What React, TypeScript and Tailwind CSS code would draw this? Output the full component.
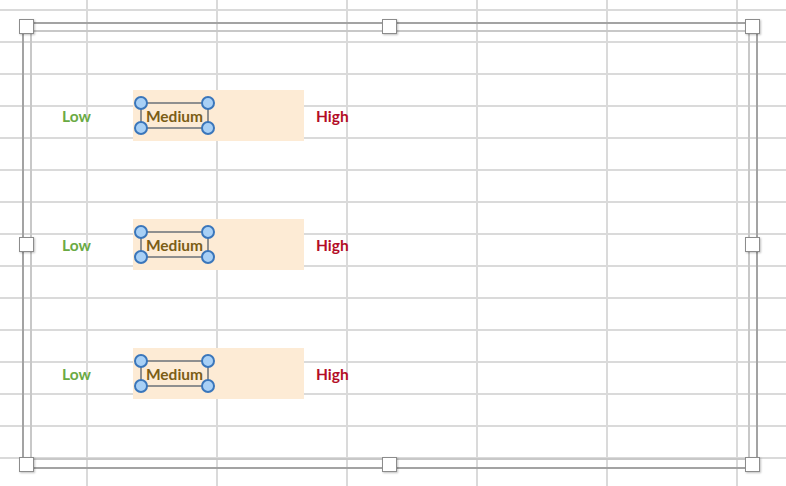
import React from "react";

const COLS = [88, 130, 130, 130, 130, 130, 130];
const ROWS = 16;

function Handle({ cls }: { cls: string }) {
  return (
    <div
      className={`absolute w-[15px] h-[15px] bg-white border border-[#8c8c8c] shadow-[1px_1px_2px_rgba(0,0,0,0.25)] ${cls}`}
    />
  );
}

function Dot({ cls }: { cls: string }) {
  return (
    <div
      className={`absolute w-[14px] h-[14px] rounded-full bg-[#a8d0f6] border-2 border-[#3a76bb] ${cls}`}
    />
  );
}

function Row() {
  return (
    <div className="flex items-center h-[51px]">
      <div className="w-[133px] pl-[62px] mt-[3px] text-[#6aaa44]">Low</div>
      <div className="w-[171px] h-[51px] bg-[#fdebd5] flex items-center pl-[7px]">
        <div className="relative w-[69px] h-[27px] border-2 border-[#8f8f8f] flex items-center justify-center text-[#7b5d16]">
          <span className="mt-[3px]">Medium</span>
          <Dot cls="-left-[8px] -top-[8px]" />
          <Dot cls="-right-[8px] -top-[8px]" />
          <Dot cls="-left-[8px] -bottom-[8px]" />
          <Dot cls="-right-[8px] -bottom-[8px]" />
        </div>
      </div>
      <div className="ml-[12px] mt-[3px] text-[#b30d26]">High</div>
    </div>
  );
}

export default function App() {
  return (
    <div className="relative w-[786px] h-[486px] overflow-hidden bg-white font-['Lato','Liberation_Sans',sans-serif] font-bold text-[15.5px]">
      {/* spreadsheet grid */}
      <div className="flex flex-col">
        {Array.from({ length: ROWS }).map((_, r) => (
          <div key={r} className={`flex ${r === 0 ? "h-[11px]" : "h-[32px]"}`}>
            {COLS.map((w, c) => (
              <div
                key={c}
                style={{ width: w }}
                className="shrink-0 border-r-2 border-b-2 border-[#dadada]"
              />
            ))}
          </div>
        ))}
      </div>

      {/* selection frame */}
      <div className="absolute left-[22px] top-[22px] w-[736px] h-[447px] border-[2px] border-[#a3a3a3]" />
      <div className="absolute left-[30px] top-[30px] w-[720px] h-[430px] border-[2px] border-[#c8c8c8]" />

      {/* content */}
      <div className="absolute left-0 top-[90px] flex flex-col gap-[78px]">
        <Row />
        <Row />
        <Row />
      </div>

      <Handle cls="left-[19px] top-[19px]" />
      <Handle cls="left-[382px] top-[19px]" />
      <Handle cls="left-[745px] top-[19px]" />
      <Handle cls="left-[19px] top-[237px]" />
      <Handle cls="left-[745px] top-[237px]" />
      <Handle cls="left-[19px] top-[457px]" />
      <Handle cls="left-[382px] top-[457px]" />
      <Handle cls="left-[745px] top-[457px]" />
    </div>
  );
}
